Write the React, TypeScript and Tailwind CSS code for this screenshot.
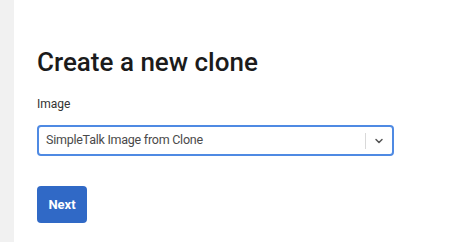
import React from "react";

const App: React.FC = () => {
  return (
    <div className="flex h-[242px] w-[474px] bg-white" style={{ fontFamily: "Roboto, 'Noto Sans', sans-serif" }}>
      {/* 왼쪽 사이드 스트립 */}
      <div className="w-[14px] shrink-0 bg-[#f1f1f1]" />

      <div className="flex flex-col pl-[23px] pt-[45px]">
        <h1 className="text-[26px] leading-[34px] font-medium text-[#1b1b1b]">
          Create a new clone
        </h1>

        <label className="mt-[17px] text-[12px] leading-[16px] text-[#333]">Image</label>

        {/* 이미지 선택 */}
        <div className="mt-[13px] flex h-[31px] w-[357px] items-center rounded-[4px] border-2 border-solid border-[#4f8ae3] bg-white">
          <span className="flex-1 pl-[7px] text-[12.5px] tracking-[-0.25px] text-[#4a4a4a]">SimpleTalk Image from Clone</span>
          <div className="h-[16px] w-px bg-[#d9d9d9]" />
          <div className="flex w-[26px] items-center justify-center">
            <svg width="10" height="10" viewBox="0 0 10 10" fill="none">
              <path d="M2 3.5 L5 6.5 L8 3.5" stroke="#555" strokeWidth="1.5" strokeLinecap="round" strokeLinejoin="round" />
            </svg>
          </div>
        </div>

        <button className="mt-[30px] h-[37px] w-[50px] rounded-[4px] bg-[#3069c6] text-[13px] font-bold text-white">
          Next
        </button>
      </div>
    </div>
  );
};

export default App;
